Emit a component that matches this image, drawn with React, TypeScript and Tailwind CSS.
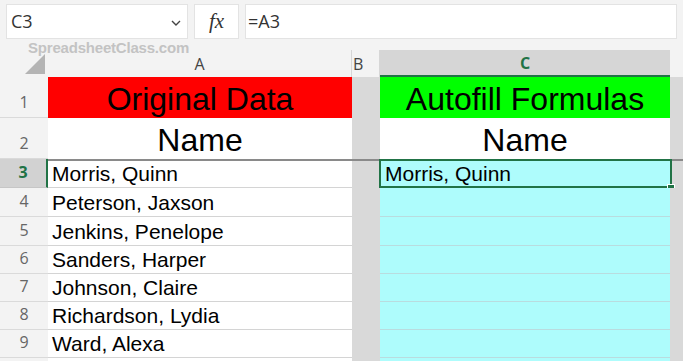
import React from "react";

type Row = { n: number; h: number; a: string; c: string };

const rows: Row[] = [
  { n: 3, h: 29, a: "Morris, Quinn", c: "Morris, Quinn" },
  { n: 4, h: 29, a: "Peterson, Jaxson", c: "" },
  { n: 5, h: 29, a: "Jenkins, Penelope", c: "" },
  { n: 6, h: 28, a: "Sanders, Harper", c: "" },
  { n: 7, h: 28, a: "Johnson, Claire", c: "" },
  { n: 8, h: 28, a: "Richardson, Lydia", c: "" },
  { n: 9, h: 28, a: "Ward, Alexa", c: "" },
  { n: 10, h: 28, a: "", c: "" },
];

const ui = { fontFamily: '"Open Sans", "Noto Sans", sans-serif' };
const cell = { fontFamily: '"Liberation Sans", Arial, sans-serif' };

function RowHead({ n, active }: { n: number; active?: boolean }) {
  return (
    <div
      style={ui}
      className={`w-[48px] shrink-0 flex items-end justify-center pb-[3px] text-[16px] border-b ${
        active
          ? "bg-[#d2d2d2] text-[#217346] font-bold border-r-2 border-r-[#217346] border-b-[#c6c6c6]"
          : "bg-[#f3f3f3] text-[#666] border-b-[#dadada]"
      }`}
    >
      {n < 10 ? n : null}
    </div>
  );
}

export default function App() {
  return (
    <div className="w-[683px] h-[361px] overflow-hidden bg-[#f3f3f3] relative select-none">
      {/* formula bar */}
      <div className="h-[50px] flex items-start gap-[6px] pt-[4px] px-[6px]" style={ui}>
        <div className="w-[182px] h-[35px] bg-white border border-[#e3e3e3] flex items-center justify-between pl-[4px] pr-[6px]">
          <span className="text-[18px] text-[#333]">C3</span>
          <svg width="10" height="6" viewBox="0 0 10 6" className="mt-[2px]">
            <path d="M1 1 L5 5 L9 1" fill="none" stroke="#444" strokeWidth="1.4" />
          </svg>
        </div>
        <div className="w-[45px] h-[35px] bg-white border border-[#e3e3e3] flex items-center justify-center">
          <span
            className="text-[21px] italic text-[#333] leading-none"
            style={{ fontFamily: '"Liberation Serif", "Times New Roman", serif' }}
          >
            fx
          </span>
        </div>
        <div className="w-[432px] h-[35px] bg-white border border-[#e3e3e3] flex items-center pl-[2px]">
          <span className="text-[18px] text-[#333]">=A3</span>
        </div>
      </div>

      {/* watermark */}
      <div
        className="absolute left-[28px] top-[37px] text-[15px] font-bold text-[#c3c3c3] tracking-[-0.2px]"
        style={cell}
      >
        SpreadsheetClass.com
      </div>

      {/* column headers */}
      <div className="h-[27px] flex text-[16px] text-[#444]" style={ui}>
        <div className="w-[48px] shrink-0 flex items-end justify-end pr-[3px] pb-[3px]">
          <svg width="20" height="20" viewBox="0 0 20 20">
            <polygon points="20,0 20,20 0,20" fill="#b4b4b4" />
          </svg>
        </div>
        <div className="w-[304px] shrink-0 flex items-center justify-center border-r border-[#d6d6d6]">A</div>
        <div className="w-[28px] shrink-0 flex items-center justify-start pl-[1px] border-r border-[#d6d6d6]">B</div>
        <div className="w-[290px] shrink-0 flex items-center justify-center bg-[#d6d6d6] border-b-2 border-[#217346] text-[#217346] font-bold">
          C
        </div>
        <div className="flex-1" />
      </div>

      {/* row 1 */}
      <div className="h-[41px] flex" style={cell}>
        <RowHead n={1} />
        <div className="w-[304px] shrink-0 bg-[#ff0000] flex items-end justify-center text-[32px] leading-[38px] text-black">
          Original Data
        </div>
        <div className="w-[28px] shrink-0 bg-[#d9d9d9]" />
        <div className="w-[290px] shrink-0 bg-[#00ff00] flex items-end justify-center text-[32px] leading-[38px] text-black">
          Autofill Formulas
        </div>
        <div className="flex-1 bg-[#d9d9d9]" />
      </div>

      {/* row 2 */}
      <div className="h-[41px] flex" style={cell}>
        <RowHead n={2} />
        <div className="w-[304px] shrink-0 bg-white flex items-end justify-center text-[32px] leading-[38px] text-black">
          Name
        </div>
        <div className="w-[28px] shrink-0 bg-[#d9d9d9]" />
        <div className="w-[290px] shrink-0 bg-white flex items-end justify-center text-[32px] leading-[38px] text-black">
          Name
        </div>
        <div className="flex-1 bg-[#d9d9d9]" />
      </div>

      {/* data rows */}
      {rows.map((r) => {
        const first = r.n === 3;
        return (
          <div key={r.n} className="flex relative" style={{ height: r.h, ...cell }}>
            <RowHead n={r.n} active={first} />
            <div
              className={`w-[304px] shrink-0 bg-white border-b border-[#d4d4d4] flex items-end pl-[4px] pb-[1px] text-[21px] leading-[25px] text-black ${
                first ? "border-t-2 border-t-[#8a8a8a]" : ""
              }`}
            >
              {r.a}
            </div>
            <div
              className={`w-[28px] shrink-0 bg-[#d9d9d9] ${first ? "border-t-2 border-t-[#8a8a8a]" : ""}`}
            />
            <div className="w-[290px] shrink-0 bg-[#aefcfc] border-b border-[#b9dcdf] flex items-end pl-[5px] pb-[1px] text-[21px] leading-[25px] text-black relative">
              {r.c}
              {first && (
                <>
                  <div className="absolute left-[-1px] right-[-2px] top-0 bottom-[-1px] border-2 border-[#217346] pointer-events-none" />
                  <div className="absolute right-[-5px] bottom-[-5px] w-[8px] h-[8px] bg-[#217346] border border-white" />
                </>
              )}
            </div>
            <div className={`flex-1 bg-[#d9d9d9] ${first ? "border-t-2 border-t-[#8a8a8a]" : ""}`} />
          </div>
        );
      })}
    </div>
  );
}
